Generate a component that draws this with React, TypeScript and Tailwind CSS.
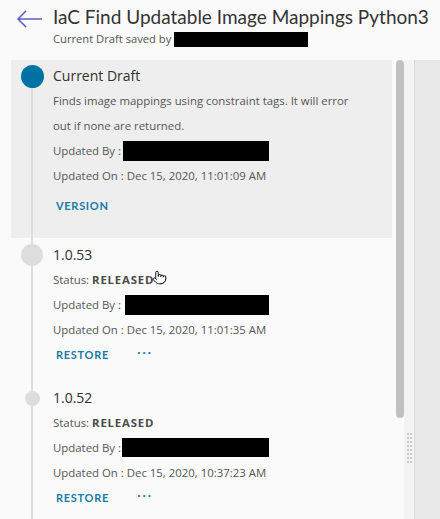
import { Pointer } from 'lucide-react';

type Version = {
  title: string;
  status?: string;
  description?: string[];
  updatedOn: string;
  byWidth: string;
  boxWidth: string;
  boxHeight: string;
  action: string;
  dots: boolean;
  active?: boolean;
  dot: string;
  dotOffset: string;
  pad: string;
  cursor?: boolean;
};

const versions: Version[] = [
  {
    title: 'Current Draft',
    description: [
      'Finds image mappings using constraint tags. It will error',
      'out if none are returned.',
    ],
    updatedOn: 'Dec 15, 2020, 11:01:09 AM',
    byWidth: 'w-[70px]',
    boxWidth: 'w-[146px]',
    boxHeight: 'h-[20px]',
    action: 'VERSION',
    dots: false,
    active: true,
    dot: 'w-[23px] h-[23px] bg-[#0072a3]',
    dotOffset: 'h-[5px]',
    pad: 'pt-[4px] pb-[20px]',
  },
  {
    title: '1.0.53',
    status: 'RELEASED',
    updatedOn: 'Dec 15, 2020, 11:01:35 AM',
    byWidth: 'w-[72px]',
    boxWidth: 'w-[144px]',
    boxHeight: 'h-[20px]',
    action: 'RESTORE',
    dots: true,
    dot: 'w-[22px] h-[22px] bg-[#dddddd]',
    dotOffset: 'h-[6px]',
    pad: 'pt-[5px] pb-[14px]',
    cursor: true,
  },
  {
    title: '1.0.52',
    status: 'RELEASED',
    updatedOn: 'Dec 15, 2020, 10:37:23 AM',
    byWidth: 'w-[69px]',
    boxWidth: 'w-[147px]',
    boxHeight: 'h-[19px]',
    action: 'RESTORE',
    dots: true,
    dot: 'w-[15px] h-[15px] bg-[#dddddd]',
    dotOffset: 'h-[10px]',
    pad: 'pt-[5px] pb-[14px]',
  },
];

function VersionItem({ v }: { v: Version }) {
  return (
    <div className={`flex ${v.active ? 'bg-[#eeeeee]' : ''}`}>
      {/* timeline column */}
      <div className="w-[42px] flex flex-col items-center shrink-0">
        <div className={`${v.dotOffset} w-[2px] ${v.active ? '' : 'bg-[#dddddd]'}`} />
        <div className={`${v.dot} rounded-full shrink-0`} />
        <div className="flex-1 w-[2px] bg-[#dddddd]" />
      </div>

      <div className={`flex-1 ${v.pad} font-['Open_Sans',sans-serif] text-[11.4px] leading-[25px] text-[#565656]`}>
        <div className="h-[24px] leading-[24px] text-[14px] font-medium text-[#313131]">{v.title}</div>
        {v.description?.map((line) => (
          <div key={line}>{line}</div>
        ))}
        {v.status && (
          <div className="relative flex items-center">
            <span>Status:&nbsp;</span>
            <span className="font-bold tracking-[0.8px] text-[#4a4a4a]">{v.status}</span>
            {v.cursor && (
              <Pointer
                size={15}
                strokeWidth={1.5}
                className="absolute left-[99px] top-[3px] text-black fill-white"
              />
            )}
          </div>
        )}
        <div className="flex items-center">
          <span className={`${v.byWidth} shrink-0`}>Updated By :</span>
          <span className={`${v.boxWidth} ${v.boxHeight} bg-black`} />
        </div>
        <div>Updated On : {v.updatedOn}</div>
        <div className={`flex items-center gap-[28px] pl-[3px] ${v.active ? 'mt-[5px]' : ''}`}>
          <span className="font-['Lato',sans-serif] text-[11px] font-bold tracking-[0.7px] text-[#1a7aa6]">
            {v.action}
          </span>
          {v.dots && <span className="text-[13px] font-bold tracking-[1.5px] text-[#1a7aa6] -mt-[5px]">···</span>}
        </div>
      </div>
    </div>
  );
}

export default function App() {
  return (
    <div className="w-[440px] h-[519px] bg-[#fafafa] overflow-hidden flex flex-col font-['Lato',sans-serif]">
      {/* Header */}
      <div className="h-[60px] flex shrink-0">
        <div className="w-[53px] pl-[17px] pt-[10px] shrink-0">
          <svg width="25" height="18" viewBox="0 0 25 18" fill="none">
            <path d="M1 9h24M9 1 1 9l8 8" stroke="#5b5fc7" strokeWidth="1.6" strokeLinejoin="round" />
          </svg>
        </div>
        <div className="pt-[4px]">
          <div className="text-[19px] leading-[26px] text-[#333333] whitespace-nowrap">
            IaC Find Updatable Image Mappings Python3
          </div>
          <div className="flex items-center font-['Open_Sans',sans-serif] text-[11.2px] leading-[16px] text-[#565656] mt-[1px]">
            <span className="w-[121px] shrink-0">Current Draft saved by</span>
            <span className="w-[134px] h-[15px] bg-black" />
          </div>
        </div>
      </div>

      {/* Body */}
      <div className="flex-1 flex min-h-0">
        <div className="w-[392px] pl-[11px] overflow-hidden shrink-0">
          {versions.map((v) => (
            <VersionItem key={v.title} v={v} />
          ))}
        </div>

        {/* scrollbar */}
        <div className="w-[12px] pl-[4px] shrink-0 bg-[#fafafa]">
          <div className="w-[8px] h-[358px] rounded-full bg-[#c1c1c1]" />
        </div>

        {/* splitter */}
        <div className="w-[11px] bg-[#f3f3f3] flex justify-center pt-[373px] shrink-0 border-r border-[#d9d9d9]">
          <div className="grid grid-cols-2 gap-x-[1px] gap-y-[2px] h-fit">
            {Array.from({ length: 16 }).map((_, i) => (
              <span key={i} className="w-[2px] h-[2px] bg-[#c9c9c9]" />
            ))}
          </div>
        </div>

        <div className="flex-1 bg-[#e8e8e8]" />
      </div>
    </div>
  );
}
